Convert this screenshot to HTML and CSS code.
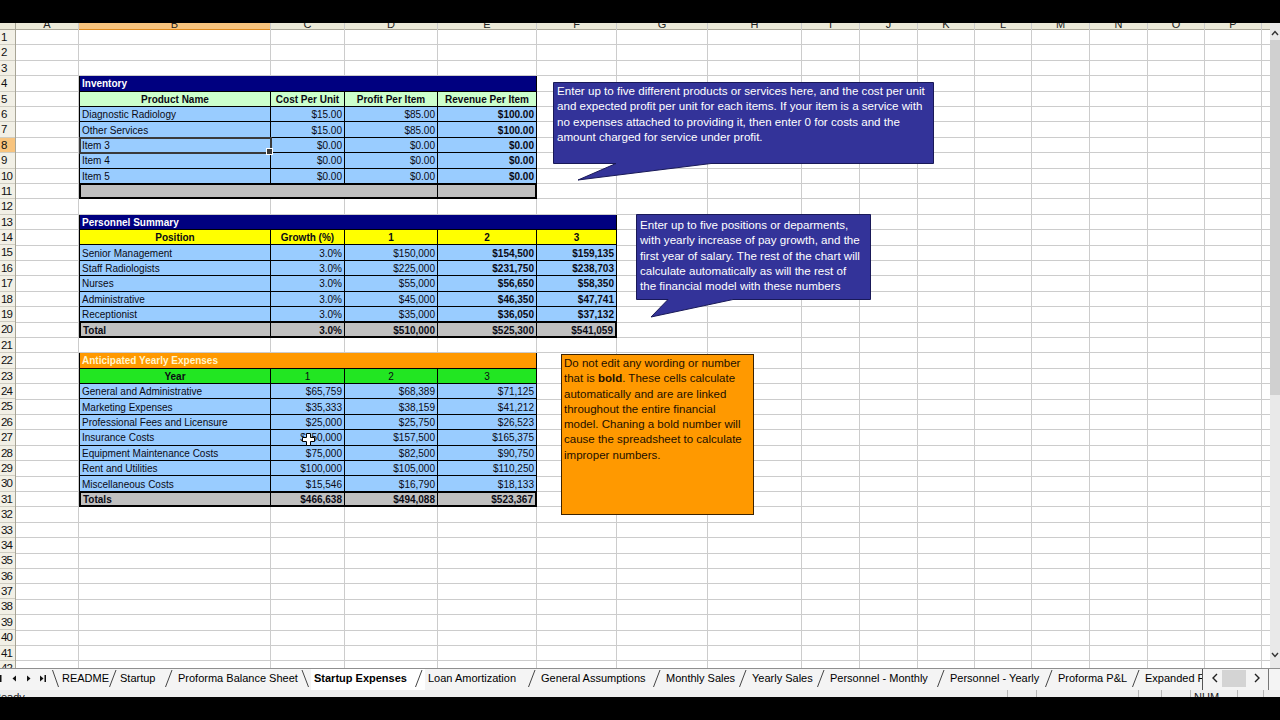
FILE: index.html
```html
<!DOCTYPE html>
<html>
<head>
<meta charset="utf-8">
<title>Startup Expenses</title>
<link rel="stylesheet" href="styles.css">
</head>
<body>
<div class="app">
  <div class="topbar"></div>
  <div class="sheet-area">
    <div class="grid">
      <div class="col k1">
        <div class="ch corner"></div>
        <div class="rn">1</div><div class="rn">2</div><div class="rn">3</div><div class="rn">4</div><div class="rn">5</div><div class="rn">6</div><div class="rn">7</div><div class="rn sel">8</div><div class="rn">9</div><div class="rn">10</div>
        <div class="rn">11</div><div class="rn">12</div><div class="rn">13</div><div class="rn">14</div><div class="rn">15</div><div class="rn">16</div><div class="rn">17</div><div class="rn">18</div><div class="rn">19</div><div class="rn">20</div>
        <div class="rn">21</div><div class="rn">22</div><div class="rn">23</div><div class="rn">24</div><div class="rn">25</div><div class="rn">26</div><div class="rn">27</div><div class="rn">28</div><div class="rn">29</div><div class="rn">30</div>
        <div class="rn">31</div><div class="rn">32</div><div class="rn">33</div><div class="rn">34</div><div class="rn">35</div><div class="rn">36</div><div class="rn">37</div><div class="rn">38</div><div class="rn">39</div><div class="rn">40</div>
        <div class="rn">41</div><div class="rn">42</div>
      </div>
      <div class="col k2"><div class="ch"><span>A</span></div></div>
      <div class="col k3"><div class="ch sel"><span>B</span></div></div>
      <div class="col k4"><div class="ch"><span>C</span></div></div>
      <div class="col k5"><div class="ch"><span>D</span></div></div>
      <div class="col k6"><div class="ch"><span>E</span></div></div>
      <div class="col k7"><div class="ch"><span>F</span></div></div>
      <div class="col k8"><div class="ch"><span>G</span></div></div>
      <div class="col k9"><div class="ch"><span>H</span></div></div>
      <div class="col k10"><div class="ch"><span>I</span></div></div>
      <div class="col k11"><div class="ch"><span>J</span></div></div>
      <div class="col k12"><div class="ch"><span>K</span></div></div>
      <div class="col k13"><div class="ch"><span>L</span></div></div>
      <div class="col k14"><div class="ch"><span>M</span></div></div>
      <div class="col k15"><div class="ch"><span>N</span></div></div>
      <div class="col k16"><div class="ch"><span>O</span></div></div>
      <div class="col k17"><div class="ch"><span>P</span></div></div>
      <div class="col k18"><div class="ch"></div></div>

      <!-- Inventory -->
      <div class="tbl inv">
        <div class="c title">Inventory</div>
        <div class="c lg m b">Product Name</div>
        <div class="c lg m b">Cost Per Unit</div>
        <div class="c lg m b">Profit Per Item</div>
        <div class="c lg m b">Revenue Per Item</div>

        <div class="c bl">Diagnostic Radiology</div>
        <div class="c bl r">$15.00</div>
        <div class="c bl r">$85.00</div>
        <div class="c bl r b">$100.00</div>

        <div class="c bl">Other Services</div>
        <div class="c bl r">$15.00</div>
        <div class="c bl r">$85.00</div>
        <div class="c bl r b">$100.00</div>

        <div class="c bl active">Item 3</div>
        <div class="c bl r">$0.00</div>
        <div class="c bl r">$0.00</div>
        <div class="c bl r b">$0.00</div>

        <div class="c bl">Item 4</div>
        <div class="c bl r">$0.00</div>
        <div class="c bl r">$0.00</div>
        <div class="c bl r b">$0.00</div>

        <div class="c bl">Item 5</div>
        <div class="c bl r">$0.00</div>
        <div class="c bl r">$0.00</div>
        <div class="c bl r b">$0.00</div>

        <div class="c gy tot first s3"></div>
        <div class="c gy tot last"></div>
      </div>

      <!-- Personnel -->
      <div class="tbl pers">
        <div class="c title">Personnel Summary</div>
        <div class="c ye m b">Position</div>
        <div class="c ye m b">Growth (%)</div>
        <div class="c ye m b">1</div>
        <div class="c ye m b">2</div>
        <div class="c ye m b">3</div>

        <div class="c bl">Senior Management</div>
        <div class="c bl r">3.0%</div>
        <div class="c bl r">$150,000</div>
        <div class="c bl r b">$154,500</div>
        <div class="c bl r b">$159,135</div>

        <div class="c bl">Staff Radiologists</div>
        <div class="c bl r">3.0%</div>
        <div class="c bl r">$225,000</div>
        <div class="c bl r b">$231,750</div>
        <div class="c bl r b">$238,703</div>

        <div class="c bl">Nurses</div>
        <div class="c bl r">3.0%</div>
        <div class="c bl r">$55,000</div>
        <div class="c bl r b">$56,650</div>
        <div class="c bl r b">$58,350</div>

        <div class="c bl">Administrative</div>
        <div class="c bl r">3.0%</div>
        <div class="c bl r">$45,000</div>
        <div class="c bl r b">$46,350</div>
        <div class="c bl r b">$47,741</div>

        <div class="c bl">Receptionist</div>
        <div class="c bl r">3.0%</div>
        <div class="c bl r">$35,000</div>
        <div class="c bl r b">$36,050</div>
        <div class="c bl r b">$37,132</div>

        <div class="c gy tot first b">Total</div>
        <div class="c gy tot r b">3.0%</div>
        <div class="c gy tot r b">$510,000</div>
        <div class="c gy tot r b">$525,300</div>
        <div class="c gy tot last r b">$541,059</div>
      </div>

      <!-- Expenses -->
      <div class="tbl exp">
        <div class="c title otitle">Anticipated Yearly Expenses</div>
        <div class="c gn m b">Year</div>
        <div class="c gn m">1</div>
        <div class="c gn m">2</div>
        <div class="c gn m">3</div>

        <div class="c bl">General and Administrative</div>
        <div class="c bl r">$65,759</div>
        <div class="c bl r">$68,389</div>
        <div class="c bl r">$71,125</div>

        <div class="c bl">Marketing Expenses</div>
        <div class="c bl r">$35,333</div>
        <div class="c bl r">$38,159</div>
        <div class="c bl r">$41,212</div>

        <div class="c bl">Professional Fees and Licensure</div>
        <div class="c bl r">$25,000</div>
        <div class="c bl r">$25,750</div>
        <div class="c bl r">$26,523</div>

        <div class="c bl">Insurance Costs</div>
        <div class="c bl r">$150,000</div>
        <div class="c bl r">$157,500</div>
        <div class="c bl r">$165,375</div>

        <div class="c bl">Equipment Maintenance Costs</div>
        <div class="c bl r">$75,000</div>
        <div class="c bl r">$82,500</div>
        <div class="c bl r">$90,750</div>

        <div class="c bl">Rent and Utilities</div>
        <div class="c bl r">$100,000</div>
        <div class="c bl r">$105,000</div>
        <div class="c bl r">$110,250</div>

        <div class="c bl">Miscellaneous Costs</div>
        <div class="c bl r">$15,546</div>
        <div class="c bl r">$16,790</div>
        <div class="c bl r">$18,133</div>

        <div class="c gy tot first b">Totals</div>
        <div class="c gy tot r b">$466,638</div>
        <div class="c gy tot r b">$494,088</div>
        <div class="c gy tot last r b">$523,367</div>
      </div>
    </div>
    <div class="vscroll">
      <div class="vs-up"><svg width="10" height="17" viewBox="0 0 10 17"><path d="M2 12 L5 8.5 L8 12" fill="none" stroke="#333" stroke-width="1.4"/></svg></div>
      <div class="vs-thumb"></div>
      <div class="vs-track"></div>
      <div class="vs-down"><svg width="10" height="20" viewBox="0 0 10 20"><path d="M2 5 L5 8.5 L8 5" fill="none" stroke="#333" stroke-width="1.4"/></svg></div>
    </div>
  </div>

  <div class="tabbar">
    <div class="nav">
      <svg width="59" height="21" viewBox="0 0 59 21">
        <rect x="0" y="6" width="1.5" height="7" fill="#111"/>
        <path d="M16 6.5 L12.5 9.5 L16 12.5 Z" fill="#111"/>
        <path d="M27 6.5 L30.5 9.5 L27 12.5 Z" fill="#111"/>
        <path d="M40 6.5 L43.5 9.5 L40 12.5 Z" fill="#111"/>
        <rect x="44.5" y="6" width="1.5" height="7" fill="#111"/>
        <path d="M52.5 1 L58.5 18" stroke="#444" stroke-width="1" fill="none"/>
      </svg>
    </div>
    <div class="tab w58"><span>README</span><svg class="sep" width="8" height="19" viewBox="0 0 8 19"><path d="M0.5 18 L7 1" stroke="#444" fill="none"/></svg></div>
    <div class="tab w58"><span>Startup</span><svg class="sep" width="8" height="19" viewBox="0 0 8 19"><path d="M0.5 18 L7 1" stroke="#444" fill="none"/></svg></div>
    <div class="tab w136"><span>Proforma Balance Sheet</span><svg class="sep" width="8" height="19" viewBox="0 0 8 19"><path d="M1 1 L7.5 18" stroke="#444" fill="none"/></svg></div>
    <div class="tab w114 on"><span>Startup Expenses</span><svg class="sep" width="8" height="19" viewBox="0 0 8 19"><path d="M0.5 18 L7 1" stroke="#444" fill="none"/></svg></div>
    <div class="tab w113"><span>Loan Amortization</span><svg class="sep" width="8" height="19" viewBox="0 0 8 19"><path d="M0.5 18 L7 1" stroke="#444" fill="none"/></svg></div>
    <div class="tab w125"><span>General Assumptions</span><svg class="sep" width="8" height="19" viewBox="0 0 8 19"><path d="M0.5 18 L7 1" stroke="#444" fill="none"/></svg></div>
    <div class="tab w86"><span>Monthly Sales</span><svg class="sep" width="8" height="19" viewBox="0 0 8 19"><path d="M0.5 18 L7 1" stroke="#444" fill="none"/></svg></div>
    <div class="tab w78"><span>Yearly Sales</span><svg class="sep" width="8" height="19" viewBox="0 0 8 19"><path d="M0.5 18 L7 1" stroke="#444" fill="none"/></svg></div>
    <div class="tab w120"><span>Personnel - Monthly</span><svg class="sep" width="8" height="19" viewBox="0 0 8 19"><path d="M0.5 18 L7 1" stroke="#444" fill="none"/></svg></div>
    <div class="tab w108"><span>Personnel - Yearly</span><svg class="sep" width="8" height="19" viewBox="0 0 8 19"><path d="M0.5 18 L7 1" stroke="#444" fill="none"/></svg></div>
    <div class="tab w87"><span>Proforma P&amp;L</span><svg class="sep" width="8" height="19" viewBox="0 0 8 19"><path d="M0.5 18 L7 1" stroke="#444" fill="none"/></svg></div>
    <div class="tab tlast"><span>Expanded P&amp;L</span></div>
    <div class="hs">
      <svg width="10" height="12" viewBox="0 0 10 12"><path d="M7 2 L3 6 L7 10" fill="none" stroke="#222" stroke-width="1.4"/></svg>
      <div class="hs-thumb"></div>
      <div class="hs-track"></div>
      <svg width="10" height="12" viewBox="0 0 10 12"><path d="M3 2 L7 6 L3 10" fill="none" stroke="#222" stroke-width="1.4"/></svg>
    </div>
    <div class="grip"></div>
  </div>

  <div class="statusbar">
    <div class="ready">Ready</div>
    <div class="panel p1"></div>
    <div class="panel p2"></div>
    <div class="panel p3"></div>
    <div class="panel p4"></div>
    <div class="panel p5">NUM</div>
    <div class="panel p6"></div>
    <div class="panel p7"></div>
  </div>
  <div class="bottombar"></div>

  <div class="callout co1">
    <svg class="cbg" width="381" height="99" viewBox="0 0 381 99"><path d="M0.5 0.5 H380.5 V81.5 H158 L25 98 L63 81.5 H0.5 Z" fill="#333399" stroke="#191958" stroke-width="1"/></svg>
    <div class="ctext t1">Enter up to five different products or services here, and the cost per unit<br>and expected profit per unit for each items. If your item is a service with<br>no expenses attached to providing it, then enter 0 for costs and the<br>amount charged for service under profit.</div>
  </div>

  <div class="callout co2">
    <svg class="cbg" width="235" height="104" viewBox="0 0 235 104"><path d="M0.5 0.5 H234.5 V85.5 H97 L15 103 L32 85.5 H0.5 Z" fill="#333399" stroke="#191958" stroke-width="1"/></svg>
    <div class="ctext t2">Enter up to five positions or deparments,<br>with yearly increase of pay growth, and the<br>first year of salary. The rest of the chart will<br>calculate automatically as will the rest of<br>the financial model with these numbers</div>
  </div>

  <div class="note">Do not edit any wording or number<br>that is <b>bold</b>. These cells calculate<br>automatically and are are linked<br>throughout the entire financial<br>model. Chaning a bold number will<br>cause the spreadsheet to calculate<br>improper numbers.</div>

  <svg class="cursor" width="13" height="13" viewBox="0 0 13 13"><path d="M4.5 0.5 H8.5 V4.5 H12.5 V8.5 H8.5 V12.5 H4.5 V8.5 H0.5 V4.5 H4.5 Z" fill="#fff" stroke="#000" stroke-width="1"/></svg>
</div>
</body>
</html>
```

FILE: styles.css
```css
* { box-sizing: border-box; margin: 0; padding: 0; }
html, body { background: #000; }
body {
  width: 1280px;
  height: 720px;
  overflow: hidden;
  font-family: "Liberation Sans", Arial, sans-serif;
  color: #000;
}
.app {
  position: relative;
  width: 1280px;
  height: 720px;
  display: flex;
  flex-direction: column;
  background: #000;
}
.topbar { flex: none; height: 23px; background: #000; }

.sheet-area { flex: none; height: 645px; display: flex; background: #fff; }
.grid {
  flex: none;
  width: 1270px;
  height: 645px;
  overflow: hidden;
  display: grid;
  grid-template-columns: 16px 63px 192px 74px 93px 99px 80px 91px 94px 58px 58px 57px 57px 58px 58px 57px 57px 8px;
  grid-template-rows: 7px repeat(42, 15.4px);
  background: repeating-linear-gradient(to bottom, transparent 0, transparent 14.4px, #cccccc 14.4px, #cccccc 15.4px) 0 7px / 100% 680px no-repeat #fff;
}
.col { grid-row: 1 / -1; border-right: 1px solid #cccccc; min-width: 0; }
.k1 { grid-column: 1; background: #f2f0e6; border-right: 1px solid #a8a596; }
.k2 { grid-column: 2; } .k3 { grid-column: 3; } .k4 { grid-column: 4; } .k5 { grid-column: 5; }
.k6 { grid-column: 6; } .k7 { grid-column: 7; } .k8 { grid-column: 8; } .k9 { grid-column: 9; }
.k10 { grid-column: 10; } .k11 { grid-column: 11; } .k12 { grid-column: 12; } .k13 { grid-column: 13; }
.k14 { grid-column: 14; } .k15 { grid-column: 15; } .k16 { grid-column: 16; } .k17 { grid-column: 17; }
.k18 { grid-column: 18; border-right: none; }

.ch {
  height: 7px;
  overflow: hidden;
  background: #ece9d8;
  border-bottom: 1px solid #aca899;
  text-align: center;
  font-size: 11px;
  line-height: 11px;
  color: #222;
}
.ch span { display: block; margin-top: -4px; }
.ch.sel { background: #f8c47e; border-bottom: 1px solid #e08a1e; }
.ch.corner { background: #ece9d8; }

.rn {
  height: 15.4px;
  border-bottom: 1px solid #cfcdc2;
  font-size: 11.5px;
  line-height: 14.4px;
  padding-left: 1px;
  letter-spacing: -0.9px;
  color: #111;
}
.rn.sel { background: #f8c47e; }

/* tables */
.tbl { display: grid; font-size: 10px; border-left: 1px solid #000; }
.inv { grid-column: 3 / 7; grid-row: 5 / 13; grid-template-columns: 191px 74px 93px 99px; grid-template-rows: repeat(8, 1fr); }
.pers { grid-column: 3 / 8; grid-row: 14 / 22; grid-template-columns: 191px 74px 93px 99px 80px; grid-template-rows: repeat(8, 1fr); }
.exp { grid-column: 3 / 7; grid-row: 23 / 33; grid-template-columns: 191px 74px 93px 99px; grid-template-rows: repeat(10, 1fr); }

.c {
  display: flex;
  align-items: center;
  padding: 1px 2px 0;
  border-right: 1px solid #000;
  border-bottom: 1px solid #000;
  white-space: nowrap;
  overflow: hidden;
  min-width: 0;
  color: #0a0a14;
}
.r { justify-content: flex-end; }
.m { justify-content: center; }
.b { font-weight: bold; }
.bl { background: #99ccff; }
.lg { background: #ccffcc; }
.ye { background: #ffff00; }
.gy { background: #c0c0c0; }
.gn { background: #22e622; }
.title { grid-column: 1 / -1; background: #000080; color: #fff; font-weight: bold; }
.otitle { background: #ff9900; color: #fff6cc; }
.s3 { grid-column: span 3; }
.tot { border-top: 1px solid #000; border-bottom: 2px solid #000; }
.tot.first { border-left: 1px solid #000; }
.tot.last { border-right: 2px solid #000; }

.active {
  position: relative;
  z-index: 1;
  overflow: visible;
  outline: 2px solid #3a3a3a;
  outline-offset: -1px;
}
.active::after {
  content: "";
  position: absolute;
  right: -3px;
  bottom: -3px;
  width: 5px;
  height: 5px;
  background: #3a3a3a;
  border: 1px solid #fff;
}

/* vertical scrollbar */
.vscroll { flex: none; width: 10px; background: #e9e9e9; display: flex; flex-direction: column; }
.vs-up { height: 17px; }
.vs-up svg, .vs-down svg { display: block; }
.vs-thumb { height: 355px; background: #d0d0d0; }
.vs-track { flex: 1; }
.vs-down { height: 20px; }

/* tab bar */
.tabbar {
  flex: none;
  height: 22px;
  display: flex;
  background: #f4f4f4;
  border-top: 1px solid #8f8f8f;
  font-size: 11px;
  color: #000;
}
.nav { flex: none; width: 59px; display: flex; align-items: flex-start; }
.nav svg { display: block; }
.tab {
  flex: none;
  display: flex;
  align-items: center;
  justify-content: space-between;
  padding: 0 2px 3px 3px;
  white-space: nowrap;
  overflow: hidden;
}
.tab .sep { flex: none; display: block; }
.tab.on { background: #fff; font-weight: bold; }
.w58 { width: 58px; } .w136 { width: 136px; } .w114 { width: 114px; } .w113 { width: 113px; }
.w125 { width: 125px; } .w86 { width: 86px; } .w78 { width: 78px; } .w120 { width: 120px; }
.w108 { width: 108px; } .w87 { width: 87px; }
.tlast { width: 61px; justify-content: flex-start; border-right: 1px solid #555; padding-right: 0; }
.hs { flex: none; width: 59px; display: flex; align-items: center; padding: 0 0 3px 7px; gap: 2px; }
.hs svg { display: block; flex: none; }
.hs-thumb { width: 24px; height: 17px; background: #d4d4d4; }
.hs-track { flex: 1; }
.grip { flex: none; width: 18px; border-left: 1px solid #777; margin-left: 6px; }

/* status bar */
.statusbar {
  flex: none;
  height: 7px;
  display: flex;
  background: #ececec;
  overflow: hidden;
  font-size: 11px;
  line-height: 14px;
  color: #222;
}
.ready { flex: 1; margin-left: -7px; }
.panel { flex: none; border-left: 1px solid #b5b5b5; padding-left: 3px; }
.p1 { width: 29px; } .p2 { width: 102px; } .p3 { width: 23px; } .p4 { width: 29px; }
.p5 { width: 47px; } .p6 { width: 26px; } .p7 { width: 17px; }
.bottombar { flex: 1; background: #000; }

/* callouts (floating shapes over the sheet) */
.callout { position: absolute; }
.cbg { position: absolute; left: 0; top: 0; display: block; }
.co1 { left: 553px; top: 82px; width: 381px; height: 99px; }
.co2 { left: 636px; top: 214px; width: 235px; height: 104px; }
.ctext {
  position: relative;
  color: #fff;
  font-size: 11.6px;
  line-height: 15.3px;
  white-space: nowrap;
  padding-left: 4px;
}
.t1 { padding-top: 1px; }
.t2 { padding-top: 3px; }
.note {
  position: absolute;
  left: 561px;
  top: 354px;
  width: 193px;
  height: 161px;
  background: #ff9900;
  border: 1px solid #3d2300;
  padding: 1px 0 0 2px;
  font-size: 11.5px;
  line-height: 15.3px;
  color: #1c1000;
  white-space: nowrap;
}
.cursor { position: absolute; left: 302px; top: 433px; display: block; }
```
